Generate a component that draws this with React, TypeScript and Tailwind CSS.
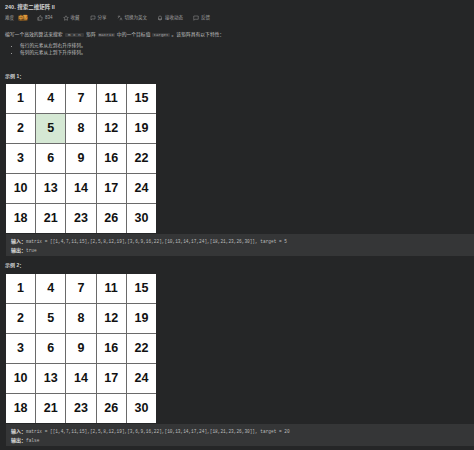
const font = "font-['Liberation_Sans','Noto_Sans_CJK_SC',sans-serif]";
const mono = "font-['Liberation_Mono','Noto_Sans_CJK_SC',monospace]";

const rows = [
  [1, 4, 7, 11, 15],
  [2, 5, 8, 12, 19],
  [3, 6, 9, 16, 22],
  [10, 13, 14, 17, 24],
  [18, 21, 23, 26, 30],
];

const Icon = ({ d }: { d: string }) => (
  <svg width="6" height="6" viewBox="0 0 24 24" fill="none" stroke="#9a9a9a" strokeWidth="2">
    <path d={d} />
  </svg>
);

const meta = [
  { label: "834", d: "M7 10v11H3V10h4zm0 0l5-8c2 0 3 1 3 3v4h6l-2 12H7" },
  { label: "收藏", d: "M12 3l3 6 6 1-4 5 1 6-6-3-6 3 1-6-4-5 6-1z" },
  { label: "分享", d: "M4 4h16v12H9l-5 4z" },
  { label: "切换为英文", d: "M3 5h10M8 3v2M4 13l6-8M12 21l4-10 4 10" },
  { label: "接收动态", d: "M6 17V10a6 6 0 0 1 12 0v7zM4 17h16M10 21h4" },
  { label: "反馈", d: "M3 4h18v13H8l-5 4z" },
];

const Code = ({ children }: { children: string }) => (
  <span className={`${mono} mx-[2px] whitespace-pre rounded-[1px] bg-[#38393a] px-[1px] text-[4.2px] text-[#a8a8a8]`}>{children}</span>
);

const Grid = ({ mark }: { mark?: boolean }) => (
  <div className="ml-[6px] grid w-[150px] grid-cols-5 gap-[1px] bg-[#6a6a6a]">
    {rows.flat().map((n) => (
      <div
        key={n}
        className={`flex h-[29px] items-center justify-center text-[12.5px] font-bold text-[#111] ${
          mark && n === 5 ? "bg-[#d5e8d4]" : "bg-white"
        }`}
      >
        {n}
      </div>
    ))}
  </div>
);

const Output = ({ target, result }: { target: number; result: string }) => (
  <div className={`${mono} ml-[6px] mt-[1px] h-[22px] bg-[#353637] pl-[5px] pt-[3px] text-[4.45px] leading-[8px] text-[#bdbdbd]`}>
    <div>
      <b className={`${font} text-[5px] text-[#e0e0e0]`}>输入：</b>
      {`matrix = [[1,4,7,11,15],[2,5,8,12,19],[3,6,9,16,22],[10,13,14,17,24],[18,21,23,26,30]], target = ${target}`}
    </div>
    <div>
      <b className={`${font} text-[5px] text-[#e0e0e0]`}>输出：</b>
      {result}
    </div>
  </div>
);

export default function App() {
  return (
    <div className={`${font} h-[450px] w-[474px] overflow-hidden bg-[#252627] text-[#c4c4c4]`}>
      <div className="pl-[5px] pt-[3px] text-[5.5px] font-bold leading-[8px] text-[#d4d4d4]">240. 搜索二维矩阵 II</div>
      <div className="mt-[2px] flex h-[10px] items-center pl-[5px] text-[4.5px] text-[#a3a3a3]">
        <span>难度</span>
        <span className="ml-[4px] mr-[9px] flex h-[6px] w-[10px] items-center justify-center rounded-[2px] bg-[#6b4a20] font-bold text-[#f0a840]">中等</span>
        {meta.map((m) => (
          <span key={m.label} className="mr-[10px] flex items-center gap-[2px]">
            <Icon d={m.d} />
            {m.label}
          </span>
        ))}
      </div>
      <p className="mt-[8px] pl-[5px] text-[4.8px] leading-[8px]">
        编写一个高效的算法来搜索<Code> m x n </Code>矩阵<Code>matrix</Code>中的一个目标值<Code>target</Code>。该矩阵具有以下特性：
      </p>
      <ul className="mt-[3px] list-disc pl-[20px] text-[4.7px] leading-[7px]">
        <li>每行的元素从左到右升序排列。</li>
        <li>每列的元素从上到下升序排列。</li>
      </ul>
      <div className="mt-[16px] h-[12px] pl-[5px] text-[5px] font-bold leading-[8px] text-[#d4d4d4]">示例 1：</div>
      <Grid mark />
      <Output target={5} result="true" />
      <div className="flex h-[18px] items-center pl-[5px] text-[5px] font-bold leading-[8px] text-[#d4d4d4]">示例 2：</div>
      <Grid />
      <Output target={20} result="false" />
    </div>
  );
}
